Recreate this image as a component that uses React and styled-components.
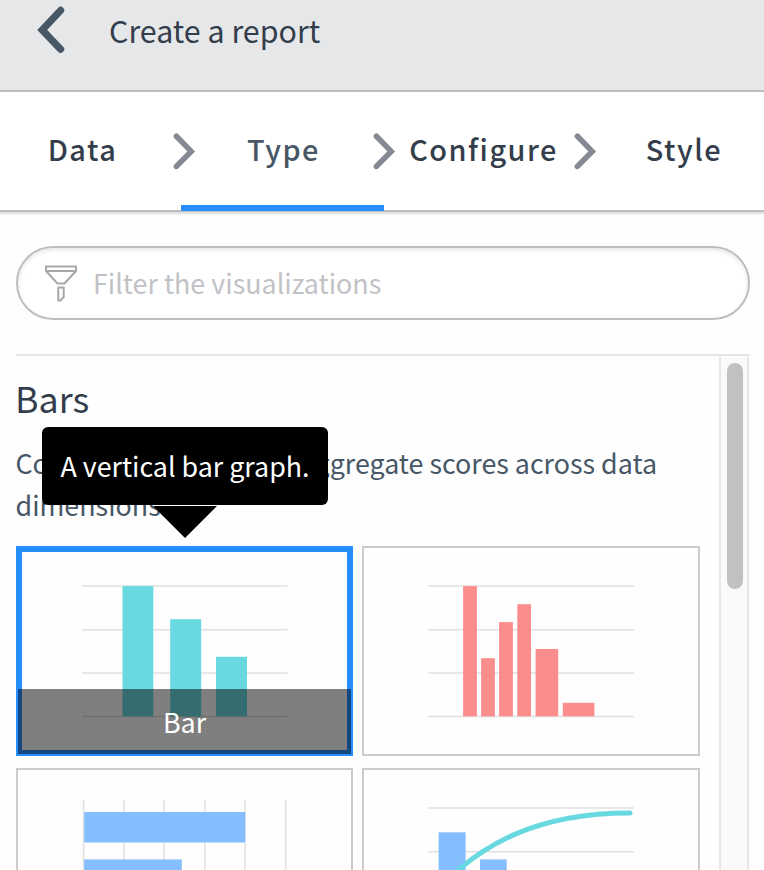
import React from "react";
import styled, { createGlobalStyle } from "styled-components";

const GlobalStyle = createGlobalStyle`
  * { box-sizing: border-box; }
  body {
    margin: 0;
    background: #fff;
    color: #333d4b;
    font-family: "Source Sans Pro", "Noto Sans CJK SC", sans-serif;
    overflow: hidden;
  }
`;

const Page = styled.div`
  width: 764px;
  height: 870px;
  overflow: hidden;
  display: flex;
  flex-direction: column;
  background: #fefefe;
`;

const Header = styled.header`
  flex: none;
  height: 92px;
  display: flex;
  align-items: flex-start;
  gap: 43px;
  padding-left: 36px;
  background: #e6e7e9;
  border-bottom: 2px solid #bdbdc3;
`;

const BackIcon = styled.svg`
  flex: none;
  width: 30px;
  height: 60px;
`;

const Title = styled.h1`
  margin: 0;
  font-size: 30.4px;
  font-weight: 400;
  line-height: 61px;
`;

const Steps = styled.nav`
  flex: none;
  height: 120px;
  display: grid;
  grid-template-columns: 164px 40px 158px 42px 158px 43px 157px;
  background: #fff;
  border-bottom: 2px solid #bdbdc3;
  box-shadow: 0 2px 2px rgba(0, 0, 0, 0.13);
`;

const Step = styled.div`
  position: relative;
  height: 118px;
  padding-left: 1px;
  font-size: 28.9px;
  font-weight: 500;
  letter-spacing: 1.5px;
  line-height: 113px;
  text-align: center;
  white-space: nowrap;
  color: ${(p) => (p.$active ? "#475766" : "#333d4b")};

  &::after {
    content: "";
    display: ${(p) => (p.$active ? "block" : "none")};
    position: absolute;
    left: -23px;
    bottom: -1px;
    width: 203px;
    height: 6px;
    background: #268eff;
  }
`;

const StepArrow = styled.svg`
  justify-self: end;
  width: 40px;
  height: 118px;
`;

const FilterBox = styled.label`
  flex: none;
  display: flex;
  align-items: center;
  gap: 16px;
  width: 734px;
  height: 74px;
  margin: 34px 0 0 16px;
  padding-left: 27px;
  border: 2px solid #bdbdc3;
  border-radius: 37px;
  background: #fff;
  box-shadow: inset 0 2px 4px rgba(0, 0, 0, 0.1);
`;

const FunnelIcon = styled.svg`
  flex: none;
  width: 32px;
  height: 37px;
`;

const FilterInput = styled.input`
  flex: 1;
  min-width: 0;
  padding: 0;
  border: 0;
  outline: 0;
  background: transparent;
  font-family: inherit;
  font-size: 26.88px;
  line-height: 40px;

  &::placeholder {
    color: #c1c2c6;
    opacity: 1;
  }
`;

const Browser = styled.main`
  flex: 1;
  min-height: 0;
  display: flex;
  justify-content: space-between;
  width: 734px;
  margin: 34px 0 0 16px;
  border-top: 2px solid #e6e6e6;
`;

const Gallery = styled.section`
  width: 684px;
`;

const GroupTitle = styled.h2`
  margin: 14px 0 0 -1px;
  font-size: 35.8px;
  font-weight: 400;
  line-height: 54px;
`;

const GroupText = styled.p`
  margin: 18px 0 20px -0.5px;
  font-size: 26.84px;
  line-height: 42px;
  color: #475766;
  white-space: nowrap;
`;

const CardGrid = styled.div`
  display: grid;
  grid-template-columns: 337px 338px;
  grid-auto-rows: 210px;
  gap: 12px 9px;
`;

const Card = styled.div`
  position: relative;
  border: 2px solid ${(p) => (p.$selected ? "#268eff" : "#cbcbcb")};
  box-shadow: ${(p) => (p.$selected ? "inset 0 0 0 4px #268eff" : "none")};
  background: #fefefe;
`;

const Chart = styled.svg`
  display: block;
  width: 333px;
  height: 206px;
`;

const CardLabel = styled.div`
  position: absolute;
  left: 0;
  right: 0;
  bottom: 0;
  height: 65px;
  background: rgba(0, 0, 0, 0.5);
  color: #fff;
  font-size: 26.84px;
  line-height: 66px;
  text-align: center;
`;

const Tooltip = styled.div`
  position: absolute;
  left: 24px;
  top: -121px;
  width: 286px;
  height: 78px;
  border-radius: 6px;
  background: #000;
  color: #fff;
  font-size: 26.84px;
  line-height: 77px;
  text-align: center;
  white-space: nowrap;

  &::after {
    content: "";
    position: absolute;
    left: 111px;
    top: 79px;
    border: 32px solid transparent;
    border-top-color: #000;
    border-bottom: 0;
  }
`;

const Track = styled.div`
  width: 30px;
  margin: 1px 1px 0 0;
  padding: 6px;
  border: solid #e6e6e6;
  border-width: 0 2px;
  background: #fafafa;
`;

const Thumb = styled.div`
  width: 16px;
  height: 226px;
  border-radius: 8px;
  background: #c1c1c1;
`;

function Chevron() {
  return (
    <StepArrow viewBox="0 0 40 118" fill="none" stroke="#848a93" strokeWidth="5.6" strokeLinecap="round">
      <path d="M12.4 44.2L27.2 59.4L12.4 74.4" />
    </StepArrow>
  );
}

function Rules({ x1, x2, ys }) {
  return ys.map((y) => (
    <line key={y} x1={x1} x2={x2} y1={y} y2={y} stroke="#e0e0e0" strokeWidth="1.5" />
  ));
}

function BarChart() {
  return (
    <Chart viewBox="0 0 333 206">
      <Rules x1={64} x2={269.5} ys={[38.1, 81.7, 125.1, 168.5]} />
      <g fill="#68d9e0">
        <rect x="104.5" y="38.1" width="30.8" height="130.4" />
        <rect x="152.2" y="71.2" width="31" height="97.3" />
        <rect x="198" y="108.8" width="31" height="59.7" />
      </g>
    </Chart>
  );
}

function HistogramChart() {
  return (
    <Chart viewBox="0 0 333 206">
      <Rules x1={64} x2={270} ys={[38.1, 81.7, 125.1, 168.5]} />
      <g fill="#fc8d8d">
        <rect x="99.1" y="38.1" width="13.8" height="130.2" />
        <rect x="117.1" y="110.2" width="13.8" height="58.1" />
        <rect x="135.1" y="74.1" width="13.8" height="94.2" />
        <rect x="153.3" y="56.2" width="13.7" height="112.1" />
        <rect x="171.6" y="101" width="22.6" height="67.3" />
        <rect x="198.8" y="154.8" width="31.6" height="13.5" />
      </g>
    </Chart>
  );
}

function HorizontalBarChart() {
  return (
    <Chart viewBox="0 0 333 206">
      {[65.6, 105.9, 146.1, 186.9, 227.1, 267.8].map((x) => (
        <line key={x} x1={x} x2={x} y1="30" y2="180" stroke="#e0e0e0" strokeWidth="1.5" />
      ))}
      <g fill="#84beff">
        <rect x="66.2" y="42" width="161" height="30.5" />
        <rect x="66.2" y="89.4" width="97.6" height="30.5" />
      </g>
    </Chart>
  );
}

function ComboChart() {
  return (
    <Chart viewBox="0 0 333 206">
      <Rules x1={64} x2={270} ys={[38, 81.8, 125.1, 168.5]} />
      <g fill="#84beff">
        <rect x="74.6" y="62.3" width="27" height="106" />
        <rect x="116" y="89.4" width="26.7" height="79" />
      </g>
      <path d="M64 130C115 71 177 43 266 43" fill="none" stroke="#68d9e0" strokeWidth="5" strokeLinecap="round" />
    </Chart>
  );
}

export default function App() {
  return (
    <>
      <GlobalStyle />
      <Page>
        <Header>
          <BackIcon viewBox="0 0 30 60" fill="none" stroke="#475766" strokeWidth="7.2" strokeLinecap="round">
            <path d="M24.6 10.4L6.2 30L24.6 49.2" />
          </BackIcon>
          <Title>Create a report</Title>
        </Header>
        <Steps>
          <Step>Data</Step>
          <Chevron />
          <Step $active>Type</Step>
          <Chevron />
          <Step>Configure</Step>
          <Chevron />
          <Step>Style</Step>
        </Steps>
        <FilterBox>
          <FunnelIcon viewBox="0 0 32 37" fill="none" stroke="#a8a8a8" strokeWidth="2">
            <path d="M1 1.5H31V6L19.5 18.5H12.5L1 6ZM1 6H31M13.3 22.5H18.7V32L15.5 35.4H13.3Z" />
          </FunnelIcon>
          <FilterInput placeholder="Filter the visualizations" />
        </FilterBox>
        <Browser>
          <Gallery>
            <GroupTitle>Bars</GroupTitle>
            <GroupText>
              Compare individual or aggregate scores across data
              <br />
              dimensions.
            </GroupText>
            <CardGrid>
              <Card $selected>
                <BarChart />
                <CardLabel>Bar</CardLabel>
                <Tooltip>A vertical bar graph.</Tooltip>
              </Card>
              <Card>
                <HistogramChart />
              </Card>
              <Card>
                <HorizontalBarChart />
              </Card>
              <Card>
                <ComboChart />
              </Card>
            </CardGrid>
          </Gallery>
          <Track>
            <Thumb />
          </Track>
        </Browser>
      </Page>
    </>
  );
}
